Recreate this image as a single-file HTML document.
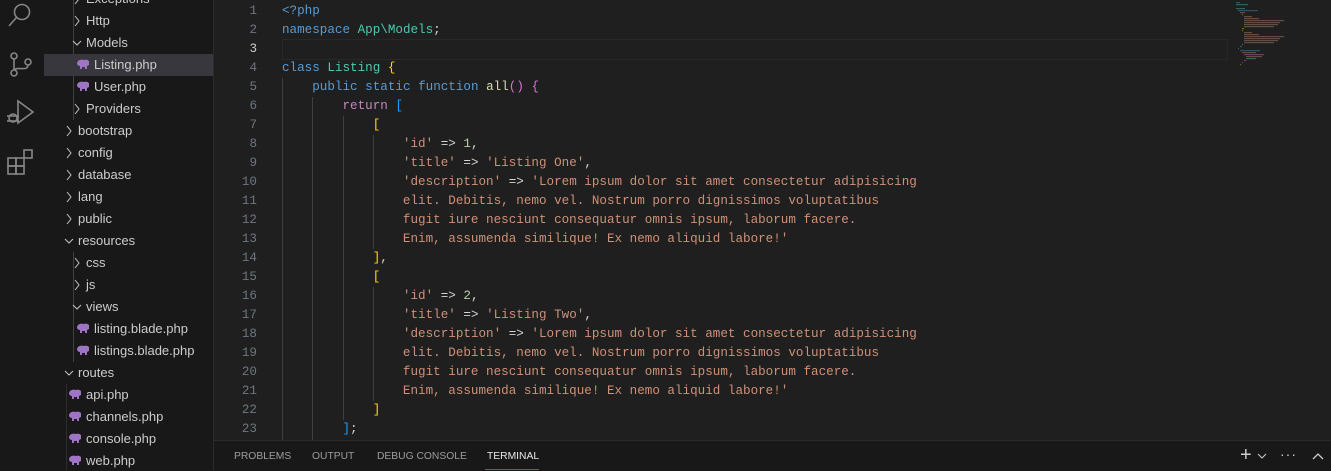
<!DOCTYPE html>
<html><head><meta charset="utf-8"><style>
*{margin:0;padding:0;box-sizing:border-box}
body{width:1331px;height:471px;overflow:hidden;background:#1f1f1f;position:relative;font-family:"Liberation Sans",sans-serif}
#act{position:absolute;left:0;top:0;width:44px;height:471px;background:#181818}
#side{position:absolute;left:44px;top:0;width:170px;height:471px;background:#181818;border-right:1px solid #2b2b2b;overflow:hidden}
.r{position:absolute;left:0;width:169px;height:22px;line-height:22px;font-size:13px;color:#cccccc;white-space:nowrap}
.r.sel{background:#37373d}
.r .t{position:absolute}
.r .c{position:absolute;top:0;width:10px;height:22px}
.r .e{position:absolute;top:5px}
#ed{position:absolute;left:214px;top:0;width:1117px;height:440px;background:#1f1f1f;overflow:hidden}
.ln{position:absolute;left:0;width:43px;text-align:right;font-family:"Liberation Mono",monospace;font-size:12.6px;color:#6e7681;line-height:19px;height:19px}
.ln.cur{color:#cccccc}
.cl{position:absolute;left:68px;font-family:"Liberation Mono",monospace;font-size:12.6px;color:#d4d4d4;line-height:19px;height:19px;white-space:pre}
.k{color:#569cd6}.ty{color:#4ec9b0}.g{color:#ffd700}.p{color:#da70d6}.b{color:#179fff}.kp{color:#c586c0}.f{color:#dcdcaa}.s{color:#ce9178}.n{color:#b5cea8}
.ig{position:absolute;width:1px;background:#404040}
#panel{position:absolute;left:214px;top:440px;width:1117px;height:31px;background:#181818;border-top:1px solid #2b2b2b;overflow:hidden}
.tab{position:absolute;top:10px;font-size:10.3px;color:#9d9d9d;letter-spacing:0}
</style></head><body>
<div id="act">
<svg width="44" height="190" viewBox="0 0 44 190" fill="none" stroke="#868686" stroke-width="1.6">
<circle cx="22" cy="12" r="7.5"/><line x1="16.5" y1="17.5" x2="9" y2="26"/>
<circle cx="14" cy="56" r="3"/><circle cx="14" cy="73" r="3"/><circle cx="28" cy="62" r="3"/><line x1="14" y1="59" x2="14" y2="70"/><path d="M28 65 C28 72 16 66 15 70"/>
<path d="M18 101 L18 123 L33 112 Z"/><circle cx="13" cy="118" r="4"/><line x1="7" y1="116" x2="19" y2="116"/><line x1="7" y1="121" x2="19" y2="121"/>
<rect x="8" y="158" width="8" height="8"/><rect x="16" y="158" width="8" height="8"/><rect x="8" y="166" width="8" height="8"/><rect x="16" y="166" width="8" height="8"/><rect x="24" y="150" width="8" height="8"/>
</svg>
</div>
<div id="side">
<div class="ig" style="left:29px;top:0;height:120px"></div>
<div class="ig" style="left:29px;top:252px;height:110px"></div>
<div class="ig" style="left:22px;top:384px;height:87px;background:#2e2e2e"></div>
</div>
<div id="ed"></div>
<div id="panel">
<div class="tab" style="left:20px">PROBLEMS</div>
<div class="tab" style="left:98px">OUTPUT</div>
<div class="tab" style="left:163px">DEBUG CONSOLE</div>
<div class="tab" style="left:273px;color:#e7e7e7">TERMINAL</div>
<div style="position:absolute;left:271px;top:28px;width:54px;height:1px;background:#0078d4"></div>
<div style="position:absolute;left:1026px;top:2px;color:#cccccc;font-size:20px;line-height:24px">+</div>
<svg style="position:absolute;left:1043px;top:12px" width="10" height="6" fill="none" stroke="#cccccc"><path d="M1 1 L5 5 L9 1"/></svg>
<div style="position:absolute;left:1066px;top:3px;color:#cccccc;font-size:14px;letter-spacing:1px;line-height:20px">···</div>
<svg style="position:absolute;left:1098px;top:11px" width="12" height="8" fill="none" stroke="#cccccc" stroke-width="1.3"><path d="M1 7 L6 2 L11 7"/></svg>
</div>
<script>
var side=document.getElementById('side');
var rows=[
['Exceptions',2,'c'],['Http',2,'c'],['Models',2,'o'],['Listing.php',3,'f',1],['User.php',3,'f'],['Providers',2,'c'],
['bootstrap',1,'c'],['config',1,'c'],['database',1,'c'],['lang',1,'c'],['public',1,'c'],['resources',1,'o'],
['css',2,'c'],['js',2,'c'],['views',2,'o'],['listing.blade.php',3,'f'],['listings.blade.php',3,'f'],['routes',1,'o'],
['api.php',2,'f'],['channels.php',2,'f'],['console.php',2,'f'],['web.php',2,'f']];
var ele='<svg class="e" width="14" height="11" viewBox="0 0 14 11"><path d="M2 2 Q4 0 8 1 Q11 0 13 2 L13 6 L11 7 L11 10 L9 10 L9 8 L6 8 L6 10 L4 10 L4 7 Q2 7 1 5 Q1 3 2 2Z" fill="#a074c4"/></svg>';
rows.forEach(function(r,i){
 var d=document.createElement('div');d.className='r'+(r[3]?' sel':'');d.style.top=(-12+22*i)+'px';
 var h='';
 if(r[2]=='f'){var ix=r[1]==3?32:24;h='<span style="position:absolute;left:'+ix+'px;top:0">'+ele+'</span><span class="t" style="left:'+(ix+18)+'px">'+r[0]+'</span>';}
 else{var cx=r[1]==1?20:28;var path=r[2]=='c'?'M3 6 L7 11 L3 16':'M1 9 L5 13 L9 9';
 h='<svg class="c" style="left:'+cx+'px" viewBox="0 0 10 22" fill="none" stroke="#c5c5c5" stroke-width="1"><path d="'+path+'"/></svg><span class="t" style="left:'+(cx+14)+'px">'+r[0]+'</span>';}
 d.innerHTML=h;side.appendChild(d);
});
var ed=document.getElementById('ed');
var L=[
'<span class="k">&lt;?php</span>',
'<span class="k">namespace</span> <span class="ty">App\\Models</span>;',
'',
'<span class="k">class</span> <span class="ty">Listing</span> <span class="g">{</span>',
'    <span class="k">public</span> <span class="k">static</span> <span class="k">function</span> <span class="f">all</span><span class="p">()</span> <span class="p">{</span>',
'        <span class="kp">return</span> <span class="b">[</span>',
'            <span class="g">[</span>',
"                <span class=\"s\">'id'</span> =&gt; <span class=\"n\">1</span>,",
"                <span class=\"s\">'title'</span> =&gt; <span class=\"s\">'Listing One'</span>,",
"                <span class=\"s\">'description'</span> =&gt; <span class=\"s\">'Lorem ipsum dolor sit amet consectetur adipisicing</span>",
'<span class="s">                elit. Debitis, nemo vel. Nostrum porro dignissimos voluptatibus</span>',
'<span class="s">                fugit iure nesciunt consequatur omnis ipsum, laborum facere.</span>',
"<span class=\"s\">                Enim, assumenda similique! Ex nemo aliquid labore!'</span>",
'            <span class="g">]</span>,',
'            <span class="g">[</span>',
"                <span class=\"s\">'id'</span> =&gt; <span class=\"n\">2</span>,",
"                <span class=\"s\">'title'</span> =&gt; <span class=\"s\">'Listing Two'</span>,",
"                <span class=\"s\">'description'</span> =&gt; <span class=\"s\">'Lorem ipsum dolor sit amet consectetur adipisicing</span>",
'<span class="s">                elit. Debitis, nemo vel. Nostrum porro dignissimos voluptatibus</span>',
'<span class="s">                fugit iure nesciunt consequatur omnis ipsum, laborum facere.</span>',
"<span class=\"s\">                Enim, assumenda similique! Ex nemo aliquid labore!'</span>",
'            <span class="g">]</span>',
'        <span class="b">]</span>;'];
var T=2,LH=19;
var h='<div style="position:absolute;left:68px;top:'+(T+2*LH-1)+'px;width:946px;height:21px;border:1px solid #282828"></div>';
h+='<div class="ig" style="left:68px;top:'+(T+4*LH)+'px;height:400px"></div>';
h+='<div class="ig" style="left:98px;top:'+(T+5*LH)+'px;height:400px"></div>';
h+='<div class="ig" style="left:129px;top:'+(T+6*LH)+'px;height:'+(16*LH)+'px"></div>';
h+='<div class="ig" style="left:159px;top:'+(T+7*LH)+'px;height:'+(6*LH)+'px"></div>';
h+='<div class="ig" style="left:159px;top:'+(T+15*LH)+'px;height:'+(6*LH)+'px"></div>';
L.forEach(function(t,i){
 h+='<div class="ln'+(i==2?' cur':'')+'" style="top:'+(T+LH*i)+'px">'+(i+1)+'</div>';
 h+='<div class="cl" style="top:'+(T+LH*i)+'px">'+t+'</div>';
});
h+='<svg style="position:absolute;left:1016px;top:0" width="101" height="80">';
var mm=[[1,'#569cd6',4],[1,'#4ec9b0',12],[0,0,0],[1,'#4ec9b0',9],[3,'#569cd6',20],[5,'#c586c0',5],[7,'#ffd700',1],[9,'#ce9178',8],[9,'#ce9178',15],[9,'#ce9178',40],[9,'#ce9178',36],[9,'#ce9178',34],[9,'#ce9178',30],[7,'#ffd700',2],[7,'#ffd700',1],[9,'#ce9178',8],[9,'#ce9178',15],[9,'#ce9178',40],[9,'#ce9178',36],[9,'#ce9178',34],[9,'#ce9178',30],[7,'#ffd700',1],[5,'#179fff',2],[3,'#da70d6',1],[5,'#569cd6',20],[7,'#ce9178',14],[9,'#c586c0',20],[11,'#ce9178',16],[11,'#4ec9b0',10],[9,'#da70d6',2],[7,'#da70d6',1],[5,'#ffd700',1]];
mm.forEach(function(m,i){if(m[2])h+='<rect x="'+(m[0]+5)+'" y="'+(2+i*2)+'" width="'+m[2]+'" height="1.2" fill="'+m[1]+'" opacity="0.4"/>';});
h+='</svg>';
ed.innerHTML=h;
</script>
</body></html>
